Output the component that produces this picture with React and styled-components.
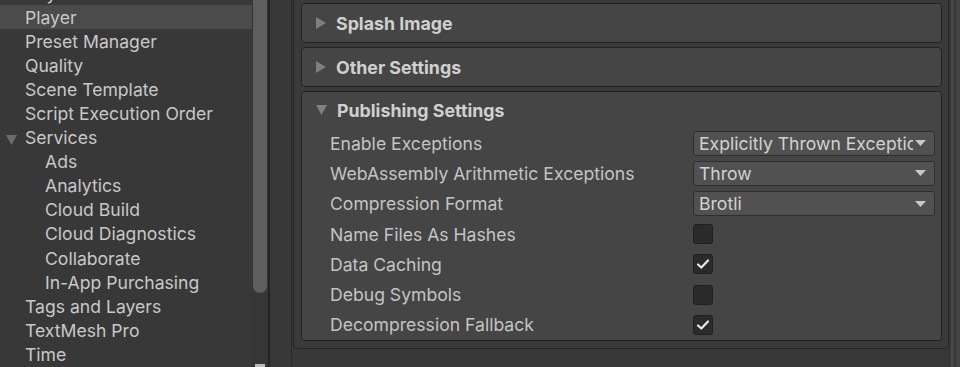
import styled, { createGlobalStyle } from "styled-components";

const GlobalStyle = createGlobalStyle`
  html, body {
    margin: 0;
    padding: 0;
    background: #383838;
  }
  body {
    font-family: Inter, "Noto Sans", sans-serif;
    -webkit-font-smoothing: antialiased;
  }
`;

const Window = styled.div`
  display: flex;
  width: 960px;
  height: 367px;
  overflow: hidden;
  background: #383838;
  color: #c4c4c4;
`;

const Sidebar = styled.div`
  width: 252px;
  flex-shrink: 0;
  overflow: hidden;
  background: #383838;
`;

const TreeList = styled.div`
  margin-top: -19px;
  display: flex;
  flex-direction: column;
`;

const TreeRow = styled.div`
  height: 24.1px;
  display: flex;
  align-items: center;
  padding-left: ${(p) => (p.$child ? 45 : 25)}px;
  position: relative;
  font-size: 17.6px;
  white-space: nowrap;
  background: ${(p) => (p.$selected ? "#4b4b4b" : "transparent")};
  color: #c8c8c8;
`;

const TreeArrow = styled.svg`
  position: absolute;
  left: 6px;
  top: 9px;
`;

const ScrollTrack = styled.div`
  width: 16px;
  flex-shrink: 0;
  display: flex;
  flex-direction: column;
  align-items: center;
  background: #363636;
`;

const ScrollThumb = styled.div`
  width: 14px;
  height: 293px;
  background: #5e5e5e;
  border-radius: 0 0 7px 7px;
`;

const ScrollArrow = styled.div`
  margin-top: auto;
  width: 10px;
  height: 3px;
  background: #bdbdbd;
`;

const Divider = styled.div`
  width: 2px;
  flex-shrink: 0;
  background: #232323;
`;

const Main = styled.div`
  flex: 1;
  min-width: 0;
  display: flex;
  background: #383838;
  padding-left: 21px;
`;

const InspectorColumn = styled.div`
  flex: 1;
  min-width: 0;
  border-left: 1px solid #2b2b2b;
  padding-right: 2px;
`;

const OuterPanel = styled.div`
  margin-top: -7px;
  margin-left: 1px;
  height: 356px;
  box-sizing: border-box;
  background: #3a3a3a;
  border: 1px solid #262626;
  border-radius: 4px;
  padding: 9px 6px 7px 7px;
  display: flex;
  flex-direction: column;
  gap: 4px;
`;

const Foldout = styled.div`
  background: #454545;
  border: 1px solid #232323;
  border-radius: 4px;
  box-sizing: border-box;
  flex: ${(p) => (p.$open ? 1 : "none")};
  display: flex;
  flex-direction: column;
`;

const FoldoutHeader = styled.div`
  height: ${(p) => (p.$open ? 36 : 38)}px;
  display: flex;
  align-items: center;
  padding-left: 14px;
  gap: 10px;
  font-size: 17.8px;
  font-weight: 700;
  color: #d0d0d0;
`;

const Rows = styled.div`
  display: flex;
  flex-direction: column;
`;

const PropRow = styled.div`
  height: 30.3px;
  display: flex;
  align-items: center;
  padding-left: 28px;
  padding-right: 6px;
`;

const PropLabel = styled.div`
  width: 363px;
  flex-shrink: 0;
  font-size: 17.6px;
  color: #c4c4c4;
  white-space: nowrap;
`;

const Dropdown = styled.div`
  flex: 1;
  min-width: 0;
  height: 25px;
  box-sizing: border-box;
  background: #515151;
  border: 1px solid #2e2e2e;
  border-radius: 3px;
  display: flex;
  align-items: center;
  gap: 2px;
  padding: 0 8px 0 5px;
  font-size: 17.6px;
  color: #d2d2d2;
  overflow: hidden;
`;

const DropdownText = styled.span`
  flex: 1;
  min-width: 0;
  white-space: nowrap;
  overflow: hidden;
`;

const Checkbox = styled.div`
  width: 20px;
  height: 20px;
  box-sizing: border-box;
  background: #2b2b2b;
  border: 1px solid #1f1f1f;
  border-radius: 3px;
  display: flex;
  align-items: center;
  justify-content: center;
`;

const RightScroll = styled.div`
  width: 9px;
  flex-shrink: 0;
  background: #3c3c3c;
  border-left: 2px solid #4a4a4a;
  border-right: 3px solid #454545;
  box-sizing: border-box;
`;

const RightTri = () => (
  <svg width="10" height="12" viewBox="0 0 10 12">
    <polygon points="0,0 10,6 0,12" fill="#7f7f7f" />
  </svg>
);

const DownTri = () => (
  <svg width="11" height="10" viewBox="0 0 11 10">
    <polygon points="0,0 11,0 5.5,10" fill="#7f7f7f" />
  </svg>
);

const Caret = () => (
  <svg width="11" height="6" viewBox="0 0 11 6" style={{ flexShrink: 0 }}>
    <polygon points="0,0 11,0 5.5,6" fill="#c8c8c8" />
  </svg>
);

const Check = () => (
  <svg width="14" height="12" viewBox="0 0 14 12">
    <path d="M2 6.5 L5.3 9.5 L12 2.5" stroke="#e8e8e8" strokeWidth="2.2" fill="none" strokeLinecap="round" strokeLinejoin="round" />
  </svg>
);

const tree = [
  { name: "Physics 2D" },
  { name: "Player", selected: true },
  { name: "Preset Manager" },
  { name: "Quality" },
  { name: "Scene Template" },
  { name: "Script Execution Order" },
  { name: "Services", expanded: true },
  { name: "Ads", child: true },
  { name: "Analytics", child: true },
  { name: "Cloud Build", child: true },
  { name: "Cloud Diagnostics", child: true },
  { name: "Collaborate", child: true },
  { name: "In-App Purchasing", child: true },
  { name: "Tags and Layers" },
  { name: "TextMesh Pro" },
  { name: "Time" },
];

const props = [
  { label: "Enable Exceptions", dropdown: "Explicitly Thrown Exceptions Only" },
  { label: "WebAssembly Arithmetic Exceptions", dropdown: "Throw" },
  { label: "Compression Format", dropdown: "Brotli" },
  { label: "Name Files As Hashes", checked: false },
  { label: "Data Caching", checked: true },
  { label: "Debug Symbols", checked: false },
  { label: "Decompression Fallback", checked: true },
];

const App = () => {
  return (
    <Window>
      <GlobalStyle />
      <Sidebar>
        <TreeList>
          {tree.map((item) => (
            <TreeRow key={item.name} $child={item.child} $selected={item.selected}>
              {item.expanded && (
                <TreeArrow width="11" height="10" viewBox="0 0 11 10">
                  <polygon points="0,0 11,0 5.5,10" fill="#6c6c6c" />
                </TreeArrow>
              )}
              {item.name}
            </TreeRow>
          ))}
        </TreeList>
      </Sidebar>
      <ScrollTrack>
        <ScrollThumb />
        <ScrollArrow />
      </ScrollTrack>
      <Divider />
      <Main>
        <InspectorColumn>
          <OuterPanel>
            <Foldout>
              <FoldoutHeader>
                <RightTri />
                Splash Image
              </FoldoutHeader>
            </Foldout>
            <Foldout>
              <FoldoutHeader>
                <RightTri />
                Other Settings
              </FoldoutHeader>
            </Foldout>
            <Foldout $open>
              <FoldoutHeader $open>
                <DownTri />
                Publishing Settings
              </FoldoutHeader>
              <Rows>
                {props.map((p) => (
                  <PropRow key={p.label}>
                    <PropLabel>{p.label}</PropLabel>
                    {p.dropdown ? (
                      <Dropdown>
                        <DropdownText>{p.dropdown}</DropdownText>
                        <Caret />
                      </Dropdown>
                    ) : (
                      <Checkbox>{p.checked && <Check />}</Checkbox>
                    )}
                  </PropRow>
                ))}
              </Rows>
            </Foldout>
          </OuterPanel>
        </InspectorColumn>
        <RightScroll />
      </Main>
    </Window>
  );
};

export default App;
